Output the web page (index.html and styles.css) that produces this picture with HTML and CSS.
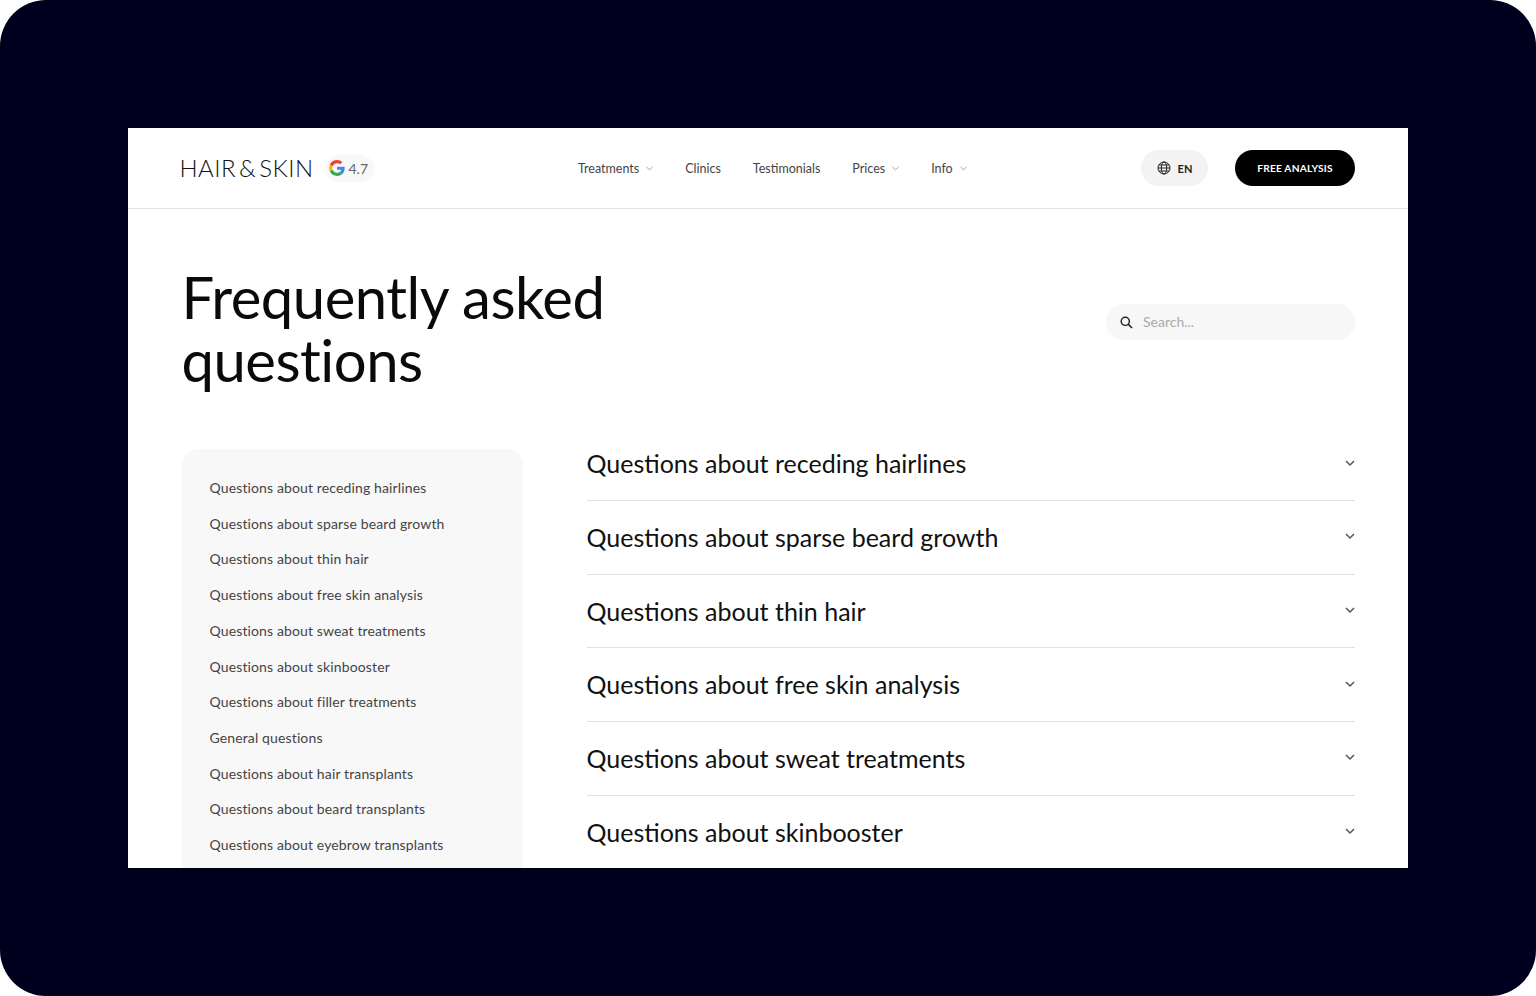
FILE: index.html
```html
<!DOCTYPE html>
<html lang="en">
<head>
<meta charset="utf-8">
<title>Hair &amp; Skin - FAQ</title>
<link rel="stylesheet" href="styles.css">
</head>
<body>
<div class="backdrop">
  <div class="window">
    <header class="header">
      <div class="brand">
        <span class="logo">HAIR<span class="amp">&amp;</span>SKIN</span>
        <span class="rating">
          <svg class="g-icon" viewBox="0 0 48 48" width="16" height="16"><path fill="#EA4335" d="M24 9.5c3.5 0 6.700 1.200 9.200 3.600l6.900-6.900C35.900 2.400 30.500 0 24 0 14.600 0 6.500 5.400 2.600 13.200l8 6.200C12.500 13.700 17.800 9.500 24 9.500z"/><path fill="#4285F4" d="M46.900 24.500c0-1.600-.1-3.100-.4-4.500H24v9h12.900c-.6 3-2.200 5.500-4.800 7.200l7.700 6c4.500-4.200 7.100-10.300 7.100-17.700z"/><path fill="#FBBC05" d="M10.500 28.600c-.5-1.500-.8-3-.8-4.600s.3-3.100.8-4.600l-8-6.200C.9 16.500 0 20.100 0 24s.9 7.500 2.600 10.800l7.900-6.200z"/><path fill="#34A853" d="M24 48c6.500 0 11.900-2.100 15.900-5.800l-7.700-6c-2.200 1.500-4.900 2.300-8.200 2.300-6.200 0-11.500-4.200-13.400-9.900l-8 6.200C6.500 42.600 14.600 48 24 48z"/></svg>
          <span>4.7</span>
        </span>
      </div>
      <nav class="nav">
        <a class="nav-item">Treatments <svg class="caret" viewBox="0 0 8 5" width="7" height="5"><path d="M.5.7 4 4 7.500.7"/></svg></a>
        <a class="nav-item">Clinics</a>
        <a class="nav-item">Testimonials</a>
        <a class="nav-item">Prices <svg class="caret" viewBox="0 0 8 5" width="7" height="5"><path d="M.5.7 4 4 7.500.7"/></svg></a>
        <a class="nav-item">Info <svg class="caret" viewBox="0 0 8 5" width="7" height="5"><path d="M.5.7 4 4 7.500.7"/></svg></a>
      </nav>
      <div class="actions">
        <button class="lang">
          <svg class="globe" viewBox="0 0 14 14" width="14" height="14"><circle cx="7" cy="7" r="6"/><ellipse cx="7" cy="7" rx="2.700" ry="6"/><path d="M1 7h12M1.800 4h10.400M1.800 10h10.400"/></svg>
          <span>EN</span>
        </button>
        <button class="cta">FREE ANALYSIS</button>
      </div>
    </header>
    <main class="content">
      <div class="hero">
        <h1 class="title">Frequently asked<br>questions</h1>
        <label class="search">
          <svg class="search-icon" viewBox="0 0 14 14" width="13" height="13"><circle cx="5.700" cy="5.700" r="4.400"/><path d="M9 9l4 4"/></svg>
          <span class="search-text">Search...</span>
        </label>
      </div>
      <div class="columns">
        <aside class="side">
          <a class="side-link">Questions about receding hairlines</a>
          <a class="side-link">Questions about sparse beard growth</a>
          <a class="side-link">Questions about thin hair</a>
          <a class="side-link">Questions about free skin analysis</a>
          <a class="side-link">Questions about sweat treatments</a>
          <a class="side-link">Questions about skinbooster</a>
          <a class="side-link">Questions about filler treatments</a>
          <a class="side-link">General questions</a>
          <a class="side-link">Questions about hair transplants</a>
          <a class="side-link">Questions about beard transplants</a>
          <a class="side-link">Questions about eyebrow transplants</a>
        </aside>
        <section class="faq">
          <div class="faq-row"><span>Questions about receding hairlines</span><svg class="chev" viewBox="0 0 10 7" width="10" height="7"><path d="M1 1l4 4 4-4"/></svg></div>
          <div class="faq-row"><span>Questions about sparse beard growth</span><svg class="chev" viewBox="0 0 10 7" width="10" height="7"><path d="M1 1l4 4 4-4"/></svg></div>
          <div class="faq-row"><span>Questions about thin hair</span><svg class="chev" viewBox="0 0 10 7" width="10" height="7"><path d="M1 1l4 4 4-4"/></svg></div>
          <div class="faq-row"><span>Questions about free skin analysis</span><svg class="chev" viewBox="0 0 10 7" width="10" height="7"><path d="M1 1l4 4 4-4"/></svg></div>
          <div class="faq-row"><span>Questions about sweat treatments</span><svg class="chev" viewBox="0 0 10 7" width="10" height="7"><path d="M1 1l4 4 4-4"/></svg></div>
          <div class="faq-row"><span>Questions about skinbooster</span><svg class="chev" viewBox="0 0 10 7" width="10" height="7"><path d="M1 1l4 4 4-4"/></svg></div>
        </section>
      </div>
    </main>
  </div>
</div>
</body>
</html>
```
FILE: styles.css
```css
* { box-sizing: border-box; }
html, body { margin: 0; height: 996px; overflow: hidden; background: #fff; }
body { font-family: Lato, "Liberation Sans", sans-serif; }
.backdrop { width: 1536px; height: 996px; padding: 128px; background: #00001e; border-radius: 46px; }
.window { width: 1280px; height: 740px; background: #fff; overflow: hidden; }
.header { height: 81px; border-bottom: 1px solid #e4e4e4; padding: 0 53px 0 51.500px; display: flex; align-items: center; position: relative; }
.brand { display: flex; align-items: center; gap: 12px; width: 398.500px; }
.logo { font-size: 24px; font-weight: 300; color: #111; letter-spacing: .45px; line-height: 1; white-space: nowrap; }
.amp { margin: 0 3px; }
.rating { display: flex; align-items: center; gap: 3px; height: 27px; padding: 0 6px 0 4px; background: #f8f8f8; border-radius: 14px; font-size: 14px; color: #666; }
.g-icon { display: block; }
.nav { display: flex; align-items: center; gap: 32px; flex: 1; }
.nav-item { font-size: 12.500px; color: #444; display: flex; align-items: center; gap: 7px; }
.caret { fill: none; stroke: #888; stroke-width: .9; }
.actions { display: flex; align-items: center; gap: 27px; }
.lang { height: 36px; width: 67px; border: 0; border-radius: 18px; background: #f3f3f3; display: flex; align-items: center; justify-content: center; gap: 7px; font: 700 11px Lato, sans-serif; color: #222; padding: 0; }
.globe { fill: none; stroke: #222; stroke-width: 1; }
.cta { height: 36px; width: 120px; border: 0; border-radius: 18px; background: #000; color: #fff; font: 700 10.200px Lato, sans-serif; letter-spacing: .2px; padding: 0; }
.content { padding: 0 53px 0 53.500px; }
.hero { display: flex; justify-content: space-between; align-items: center; height: 240px; padding-bottom: 2px; }
.title { margin: 0; font-size: 58px; line-height: 63px; font-weight: 400; color: #0a0a0a; letter-spacing: -.5px; }
.search { width: 249px; height: 36px; border-radius: 18px; background: #f7f7f7; display: flex; align-items: center; gap: 10px; padding-left: 14px; margin-bottom: 12px; }
.search-icon { fill: none; stroke: #222; stroke-width: 1.600; }
.search-text { font-size: 14px; color: #aaa; padding-bottom: 2px; }
.columns { display: flex; gap: 64px; }
.side { width: 341px; flex: none; height: 460px; background: #f8f8f8; border-radius: 16px; padding: 21px 28px; display: flex; flex-direction: column; }
.side-link { font-size: 14px; line-height: 35.700px; color: #444; white-space: nowrap; letter-spacing: .13px; }
.faq { flex: 1; margin-top: -21.500px; }
.faq-row { height: 73.650px; border-bottom: 1px solid #e0e0e0; display: flex; justify-content: space-between; align-items: center; font-size: 25px; color: #111; padding-bottom: 1px; }
.chev { fill: none; stroke: #555; stroke-width: 1.500; }
```
